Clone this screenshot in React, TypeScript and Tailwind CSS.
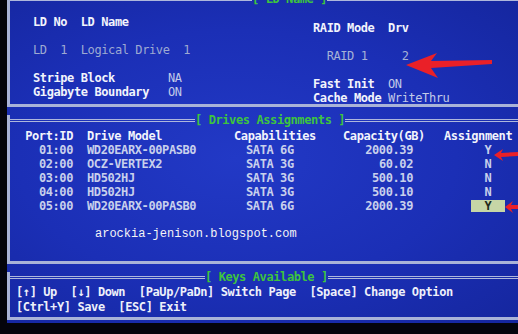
const ROWS = [
  { port: "01:00", model: "WD20EARX-00PASB0", cap: "SATA 6G", size: "2000.39", assign: "Y", hl: false },
  { port: "02:00", model: "OCZ-VERTEX2", cap: "SATA 3G", size: "60.02", assign: "N", hl: false },
  { port: "03:00", model: "HD502HJ", cap: "SATA 3G", size: "500.10", assign: "N", hl: false },
  { port: "04:00", model: "HD502HJ", cap: "SATA 3G", size: "500.10", assign: "N", hl: false },
  { port: "05:00", model: "WD20EARX-00PASB0", cap: "SATA 6G", size: "2000.39", assign: "Y", hl: true },
];

function TitleRow({ title, left }: { title: string; left: string }) {
  return (
    <div className="flex h-[10px] items-center">
      <div className={`${left} h-[3px] border-y border-[#aeb7dc]`} />
      <span className="whitespace-pre leading-[10px] font-bold text-[#3ec43e]">{title}</span>
      <div className="h-[3px] flex-1 border-y border-[#aeb7dc]" />
    </div>
  );
}

export default function App() {
  return (
    <div className="relative flex h-[334px] w-[518px] overflow-hidden bg-[#04040c] pl-[7px] font-['DejaVu_Sans_Mono',monospace] text-[12px] leading-[14px] tracking-[-0.4px]">
      <div className="-mt-[6px] flex h-[329px] flex-1 flex-col bg-[radial-gradient(ellipse_at_45%_50%,#2239c6_0%,#1b2fb6_55%,#15269e_100%)] pb-[3px]">
        {/* logical drive panel */}
        <div className="flex flex-col border-b-[3px] border-l-[3px] border-[#a9b3d8]">
          <TitleRow title="[ LD Name ]" left="w-[242px]" />
          <div className="flex h-[100px]">
            <div className="w-[303px] pl-[23px] pt-[11px]">
              <div className="whitespace-pre font-bold text-[#f2f4fc]">LD No  LD Name</div>
              <div className="mt-[14px] whitespace-pre text-[#9eaad2]">LD  1  Logical Drive  1</div>
              <div className="mt-[14px] flex">
                <span className="w-[135px] font-bold text-[#f2f4fc]">Stripe Block</span>
                <span className="text-[#c2cae8]">NA</span>
              </div>
              <div className="flex">
                <span className="w-[135px] font-bold text-[#f2f4fc]">Gigabyte Boundary</span>
                <span className="text-[#c2cae8]">ON</span>
              </div>
            </div>
            <div className="pt-[17px]">
              <div className="whitespace-pre font-bold text-[#f2f4fc]">RAID Mode  Drv</div>
              <div className="mt-[14px] whitespace-pre text-[#a6b2d6]">  RAID 1     2</div>
              <div className="mt-[14px] flex">
                <span className="w-[75px] font-bold text-[#f2f4fc]">Fast Init</span>
                <span className="text-[#c2cae8]">ON</span>
              </div>
              <div className="flex">
                <span className="w-[75px] font-bold text-[#f2f4fc]">Cache Mode</span>
                <span className="text-[#c2cae8]">WriteThru</span>
              </div>
            </div>
          </div>
        </div>

        {/* drives assignments panel */}
        <div className="mt-[8px] flex flex-col border-b-[3px] border-l-[3px] border-[#a9b3d8]">
          <TitleRow title="[ Drives Assignments ]" left="w-[185px]" />
          <div className="flex h-[136px] flex-col pt-[4px]">
            <div className="flex font-bold text-[#f2f4fc]">
              <span className="w-[63px] text-right">Port:ID</span>
              <span className="ml-[14px] w-[147px]">Drive Model</span>
              <span className="w-[82px]">Capabilities</span>
              <span className="ml-[27px] w-[82px]">Capacity(GB)</span>
              <span className="ml-[19px] w-[68px]">Assignment</span>
            </div>
            {ROWS.map((r) => (
              <div key={r.port} className="flex h-[14px] font-bold text-[#c8d0ec]">
                <span className="w-[63px] text-right">{r.port}</span>
                <span className="ml-[14px] w-[147px]">{r.model}</span>
                <span className="w-[82px] pl-[12px]">{r.cap}</span>
                <span className="ml-[27px] w-[82px] pr-[12px] text-right">{r.size}</span>
                <div className="ml-[19px] w-[68px]">
                  <div
                    className={
                      r.hl
                        ? "ml-[27px] mt-[1px] h-[12px] w-[34px] bg-[#c6d6a6] text-center leading-[12px] text-[#1c2a1c]"
                        : "ml-[27px] w-[34px] text-center"
                    }
                  >
                    {r.assign}
                  </div>
                </div>
              </div>
            ))}
            <div className="mt-[14px] pl-[85px] font-['Liberation_Mono',monospace] tracking-normal text-[#f4f4f6]">
              arockia-jenison.blogspot.com
            </div>
          </div>
        </div>

        {/* keys panel */}
        <div className="mt-[8px] flex flex-col border-b-[3px] border-l-[3px] border-[#a9b3d8]">
          <TitleRow title="[ Keys Available ]" left="w-[195px]" />
          <div className="flex h-[35px] flex-col pl-[6px] pt-[3px] font-bold leading-[15px] text-[#eef0fa]">
            <div className="whitespace-pre">[↑] Up  [↓] Down  [PaUp/PaDn] Switch Page  [Space] Change Option</div>
            <div className="whitespace-pre">[Ctrl+Y] Save  [ESC] Exit</div>
          </div>
        </div>
      </div>

      {/* red arrows drawn on the photo */}
      <svg className="pointer-events-none absolute inset-0" width="518" height="334" viewBox="0 0 518 334">
        <path d="M406 65 L437 53 L431 61 L492 60 L492 64 L431 68 L438 78 Z" fill="#ea2028" />
        <path d="M494 155 L503 149 L501 153 L518 152 L518 156 L501 157 L503 161 Z" fill="#ea2028" />
        <path d="M505 207 L513 201 L511 205 L518 205 L518 209 L511 209 L513 213 Z" fill="#ea2028" />
      </svg>
    </div>
  );
}
